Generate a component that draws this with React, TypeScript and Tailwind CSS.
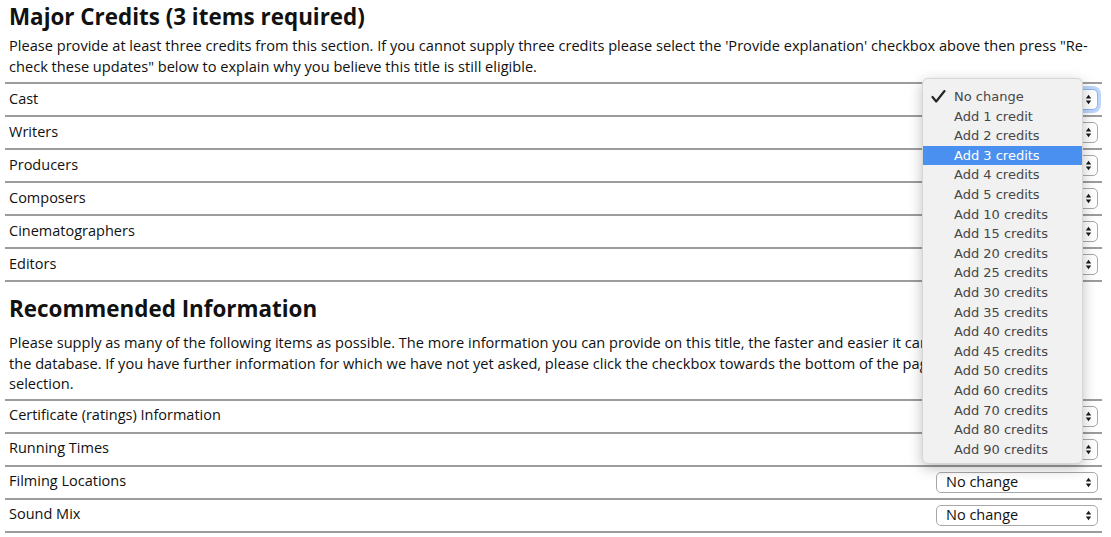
import type { ReactNode } from "react";

const majorRows = ["Cast", "Writers", "Producers", "Composers", "Cinematographers", "Editors"];
const recommendedRows = ["Certificate (ratings) Information", "Running Times", "Filming Locations", "Sound Mix"];
const options = [
  "No change",
  "Add 1 credit",
  "Add 2 credits",
  "Add 3 credits",
  "Add 4 credits",
  "Add 5 credits",
  "Add 10 credits",
  "Add 15 credits",
  "Add 20 credits",
  "Add 25 credits",
  "Add 30 credits",
  "Add 35 credits",
  "Add 40 credits",
  "Add 45 credits",
  "Add 50 credits",
  "Add 60 credits",
  "Add 70 credits",
  "Add 80 credits",
  "Add 90 credits",
];

function Arrows() {
  return (
    <svg width="7" height="11" viewBox="0 0 7 11" className="shrink-0">
      <path d="M3.5 0.8 L6.2 4.4 L0.8 4.4 Z" fill="#1a1a1a" />
      <path d="M0.8 6.6 L6.2 6.6 L3.5 10.2 Z" fill="#1a1a1a" />
    </svg>
  );
}

function SelectBox({ focused = false }: { focused?: boolean }) {
  return (
    <div
      className={
        focused
          ? "flex h-[21px] w-[162px] items-center justify-between rounded-[5px] border border-[#86b4f5] bg-white pl-[9px] pr-[5px] text-[14.5px] text-[#111] shadow-[0_0_0_3px_rgba(110,165,245,0.45)]"
          : "flex h-[21px] w-[162px] items-center justify-between rounded-[5px] border border-[#a8a8a8] bg-white pl-[9px] pr-[5px] text-[14.5px] text-[#111]"
      }
    >
      <span>No change</span>
      <Arrows />
    </div>
  );
}

function Row({ label, focused }: { label: string; focused?: boolean }) {
  return (
    <div className="flex h-[33px] items-center justify-between border-t-2 border-[#9c9c9c] px-[4px]">
      <span className="pb-[2px] text-[14.5px] text-[#111]">{label}</span>
      <SelectBox focused={focused} />
    </div>
  );
}

function Section({
  title,
  children,
  rows,
  first,
}: {
  title: string;
  children: ReactNode;
  rows: string[];
  first?: boolean;
}) {
  return (
    <section className={first ? "pt-[3px]" : "mt-[13px]"}>
      <h2 className="pl-[4px] text-[22.4px] font-bold leading-[28px] text-[#111]">{title}</h2>
      <p
        className={
          first
            ? "mt-[4px] mb-[5px] px-[4px] text-[14.6px] leading-[21px] text-[#111]"
            : "mt-[9px] mb-[5px] px-[4px] text-[14.6px] leading-[20.5px] text-[#111]"
        }
      >
        {children}
      </p>
      {rows.map((r, i) => (
        <Row key={r} label={r} focused={first && i === 0} />
      ))}
      <div className="border-t-2 border-[#9c9c9c]" />
    </section>
  );
}

function Menu() {
  return (
    <div className="absolute left-[922px] top-[78px] w-[161px] rounded-[6px] border border-[#d6d6d6] bg-[#f1f1f1] pt-[8px] pb-[4px] shadow-[0_4px_14px_rgba(0,0,0,0.25)]">
      {options.map((o, i) => (
        <div
          key={o}
          className={
            i === 3
              ? "flex h-[19.6px] items-center bg-[#4a90f0] pl-[31px] text-[13px] text-white"
              : "relative flex h-[19.6px] items-center pl-[31px] text-[13px] text-[#474747]"
          }
          style={{ fontFamily: '"DejaVu Sans", sans-serif' }}
        >
          {i === 0 ? (
            <svg width="15" height="13" viewBox="0 0 15 13" className="absolute left-[8px] top-[3px]">
              <path d="M1.5 7 L5.2 11.5 L13.5 1" fill="none" stroke="#262626" strokeWidth="2.2" strokeLinecap="round" strokeLinejoin="round" />
            </svg>
          ) : null}
          {o}
        </div>
      ))}
    </div>
  );
}

export default function App() {
  return (
    <div className="relative h-[537px] w-[1111px] overflow-hidden bg-white" style={{ fontFamily: '"Open Sans", sans-serif' }}>
      <div className="ml-[5px] w-[1097px]">
        <Section title="Major Credits (3 items required)" rows={majorRows} first>
          Please provide at least three credits from this section. If you cannot supply three credits please select the 'Provide explanation' checkbox above then press "Re-check these updates" below to explain why you believe this title is still eligible.
        </Section>
        <Section title="Recommended Information" rows={recommendedRows}>
          Please supply as many of the following items as possible. The more information you can provide on this title, the faster and easier it can be added to
          <br />
          the database. If you have further information for which we have not yet asked, please click the checkbox towards the bottom of the page and make your
          <br />
          selection.
        </Section>
      </div>
      <Menu />
    </div>
  );
}
